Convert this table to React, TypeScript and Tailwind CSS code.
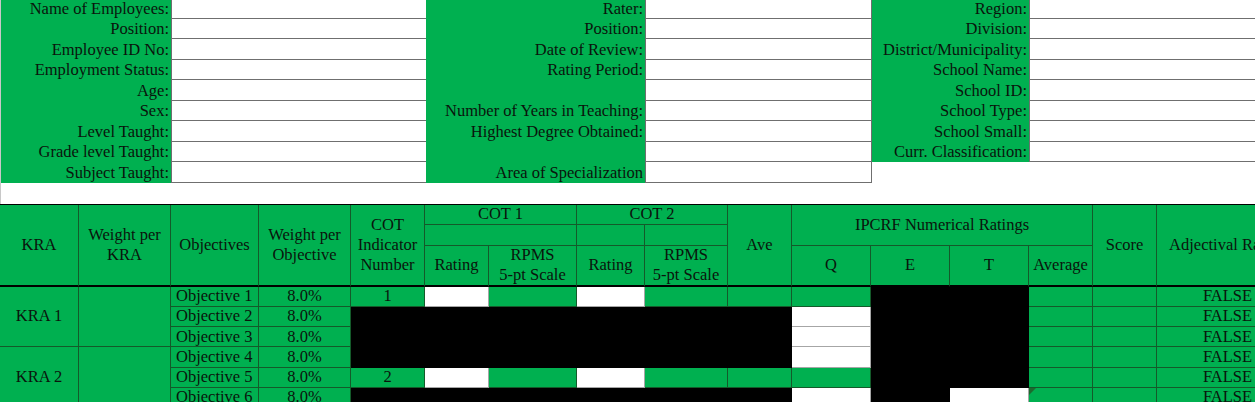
import React from "react";

const font = { fontFamily: '"Liberation Serif", "Times New Roman", serif' };

const left = [
  "Name of Employees:",
  "Position:",
  "Employee ID No:",
  "Employment Status:",
  "Age:",
  "Sex:",
  "Level Taught:",
  "Grade level Taught:",
  "Subject Taught:",
];

const middle = [
  "Rater:",
  "Position:",
  "Date of Review:",
  "Rating Period:",
  "",
  "Number of Years in Teaching:",
  "Highest Degree Obtained:",
  "",
  "Area of Specialization",
];

const right = [
  "Region:",
  "Division:",
  "District/Municipality:",
  "School Name:",
  "School ID:",
  "School Type:",
  "School Small:",
  "Curr. Classification:",
];

function Label({ text }: { text: string }) {
  return (
    <div className="flex items-end justify-end bg-[#00b050] pr-[2px] leading-[20px] whitespace-nowrap">
      {text}
    </div>
  );
}

function Input() {
  return <div className="bg-white border-l border-b border-[#6f6f6f]" />;
}

function InfoSection() {
  return (
    <div className="grid grid-cols-[170px_255px_219px_227px_157px_1fr] grid-rows-[18.5px_repeat(8,20.5px)] border-l border-[#c8c8c8]">
      {left.map((l, i) => (
        <React.Fragment key={i}>
          <Label text={l} />
          <Input />
          <Label text={middle[i]} />
          <div className="bg-white border-l border-r border-b border-[#6f6f6f]" />
          {i < 8 ? <Label text={right[i]} /> : <div className="bg-white" />}
          {i < 8 ? <div className="bg-white border-l border-b border-[#6f6f6f]" /> : <div className="bg-white" />}
        </React.Fragment>
      ))}
    </div>
  );
}

const line = "border-r border-b border-[#145a2a]";

function H({ className, children }: { className: string; children?: React.ReactNode }) {
  return (
    <div className={`flex items-center justify-center text-center leading-[20px] bg-[#00b050] ${line} ${className}`}>
      {children}
    </div>
  );
}

function G({ className, children }: { className: string; children?: React.ReactNode }) {
  return (
    <div className={`relative flex items-center justify-center leading-[20px] bg-[#00b050] whitespace-nowrap ${line} ${className}`}>
      {children}
    </div>
  );
}

function W({ className }: { className: string }) {
  return <div className={`bg-white border-r border-b border-[#a6a6a6] ${className}`} />;
}

function B({ className }: { className: string }) {
  return <div className={`bg-black ${className}`} />;
}

const rowStart: Record<number, string> = {
  1: "row-start-5",
  2: "row-start-6",
  3: "row-start-7",
  4: "row-start-8",
  5: "row-start-9",
  6: "row-start-10",
};

function RatingTable() {
  return (
    <div className="grid grid-cols-[79px_92px_88px_92px_74px_64px_88px_68px_83px_64px_79px_79px_79px_64px_64px_142px] grid-rows-[20.5px_20.5px_20.5px_20.5px_repeat(6,20.25px)] border-t border-black">
      {/* header */}
      <H className="col-start-1 row-start-1 row-span-4 border-b-2 border-b-black">KRA</H>
      <H className="col-start-2 row-start-1 row-span-4 border-b-2 border-b-black">Weight per<br />KRA</H>
      <H className="col-start-3 row-start-1 row-span-4 border-b-2 border-b-black">Objectives</H>
      <H className="col-start-4 row-start-1 row-span-4 border-b-2 border-b-black">Weight per<br />Objective</H>
      <H className="col-start-5 row-start-1 row-span-4 border-b-2 border-b-black">COT<br />Indicator<br />Number</H>
      <H className="col-start-6 col-span-2 row-start-1">COT 1</H>
      <H className="col-start-6 col-span-2 row-start-2" />
      <H className="col-start-8 col-span-2 row-start-1">COT 2</H>
      <H className="col-start-8 row-start-2" />
      <H className="col-start-9 row-start-2" />
      <H className="col-start-6 row-start-3 row-span-2 border-b-2 border-b-black">Rating</H>
      <H className="col-start-7 row-start-3 row-span-2 border-b-2 border-b-black">RPMS<br />5-pt Scale</H>
      <H className="col-start-8 row-start-3 row-span-2 border-b-2 border-b-black">Rating</H>
      <H className="col-start-9 row-start-3 row-span-2 border-b-2 border-b-black">RPMS<br />5-pt Scale</H>
      <H className="col-start-10 row-start-1 row-span-4 border-b-2 border-b-black">Ave</H>
      <H className="col-start-11 col-span-4 row-start-1 row-span-2">IPCRF Numerical Ratings</H>
      <H className="col-start-11 row-start-3 row-span-2 border-b-2 border-b-black">Q</H>
      <H className="col-start-12 row-start-3 row-span-2 border-b-2 border-b-black">E</H>
      <H className="col-start-13 row-start-3 row-span-2 border-b-2 border-b-black">T</H>
      <H className="col-start-14 row-start-3 row-span-2 border-b-2 border-b-black">Average</H>
      <H className="col-start-15 row-start-1 row-span-4 border-b-2 border-b-black">Score</H>
      <H className="col-start-16 row-start-1 row-span-4 border-b-2 border-b-black whitespace-nowrap">Adjectival Rating</H>

      {/* KRA groups */}
      <G className="col-start-1 row-start-5 row-span-3">KRA 1</G>
      <G className="col-start-2 row-start-5 row-span-3" />
      <G className="col-start-1 row-start-8 row-span-3">KRA 2</G>
      <G className="col-start-2 row-start-8 row-span-3" />

      {[1, 2, 3, 4, 5, 6].map((n) => (
        <React.Fragment key={n}>
          <G className={`col-start-3 justify-start pl-[5px] ${rowStart[n]}`}>Objective {n}</G>
          <G className={`col-start-4 ${rowStart[n]}`}>8.0%</G>
          <G className={`col-start-14 ${rowStart[n]}`}>
            {n === 6 && (
              <span className="absolute left-0 top-0 w-0 h-0 border-t-[7px] border-r-[7px] border-t-[#1d6b2e] border-r-transparent" />
            )}
          </G>
          <G className={`col-start-15 ${rowStart[n]}`} />
          <G className={`col-start-16 ${rowStart[n]}`}>FALSE</G>
        </React.Fragment>
      ))}

      {/* rows with COT entries */}
      <G className="col-start-5 row-start-5">1</G>
      <W className="col-start-6 row-start-5" />
      <G className="col-start-7 row-start-5" />
      <W className="col-start-8 row-start-5" />
      <G className="col-start-9 row-start-5" />
      <G className="col-start-10 row-start-5" />
      <G className="col-start-11 row-start-5" />

      <G className="col-start-5 row-start-9">2</G>
      <W className="col-start-6 row-start-9" />
      <G className="col-start-7 row-start-9" />
      <W className="col-start-8 row-start-9" />
      <G className="col-start-9 row-start-9" />
      <G className="col-start-10 row-start-9" />
      <G className="col-start-11 row-start-9" />

      <B className="col-start-5 col-span-6 row-start-6 row-span-3" />
      <B className="col-start-5 col-span-6 row-start-10" />
      <B className="col-start-12 col-span-2 row-start-5 row-span-5" />
      <B className="col-start-12 row-start-10" />

      <W className="col-start-11 row-start-6" />
      <W className="col-start-11 row-start-7" />
      <W className="col-start-11 row-start-8" />
      <W className="col-start-11 row-start-10" />
      <W className="col-start-13 row-start-10" />
    </div>
  );
}

export default function App() {
  return (
    <div className="w-[1255px] h-[402px] overflow-hidden bg-white text-[16.5px] text-[#0a140c]" style={font}>
      <InfoSection />
      <div className="h-[21px] border-l border-[#c8c8c8]" />
      <RatingTable />
    </div>
  );
}
